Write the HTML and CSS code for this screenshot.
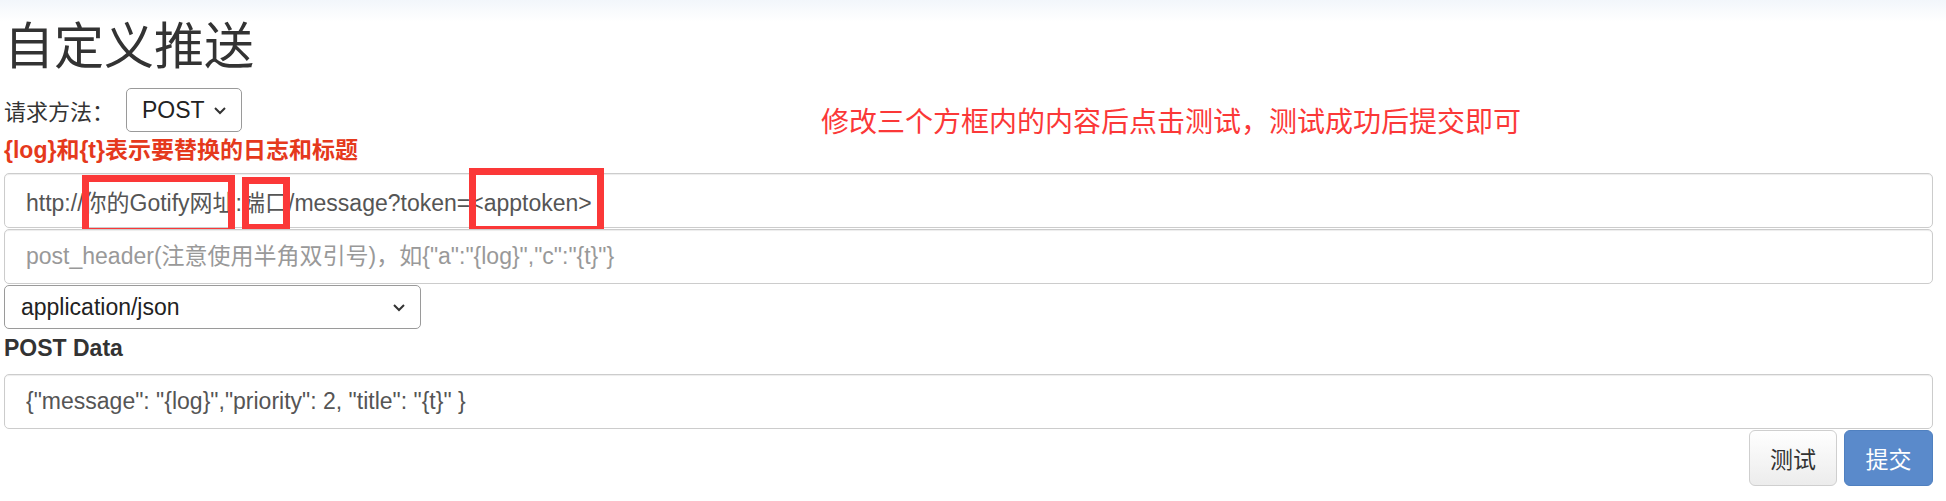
FILE: index.html
```html
<!DOCTYPE html>
<html lang="zh-CN">
<head>
<meta charset="utf-8">
<title>自定义推送</title>
<link rel="stylesheet" href="styles.css">
</head>
<body>
<div class="page">
  <h1 class="title">自定义推送</h1>
  <div class="method-row">
    <span class="method-label">请求方法：</span>
    <div class="select select-method">
      <span>POST</span>
      <svg class="chev" width="14" height="9" viewBox="0 0 14 9"><path d="M2 2l5 5 5-5" fill="none" stroke="#333" stroke-width="2"/></svg>
    </div>
  </div>
  <div class="hint">{log}和{t}表示要替换的日志和标题</div>
  <div class="field field-url">
    <input class="input" type="text" value="http://你的Gotify网址:端口/message?token=<apptoken>">
    <span class="mark mark-1"></span>
    <span class="mark mark-2"></span>
    <span class="mark mark-3"></span>
  </div>
  <div class="field">
    <input class="input" type="text" placeholder='post_header(注意使用半角双引号)，如{"a":"{log}","c":"{t}"}'>
  </div>
  <div class="select select-type">
    <span>application/json</span>
    <svg class="chev" width="14" height="9" viewBox="0 0 14 9"><path d="M2 2l5 5 5-5" fill="none" stroke="#333" stroke-width="2"/></svg>
  </div>
  <div class="data-label">POST Data</div>
  <div class="field">
    <input class="input" type="text" value='{"message": "{log}","priority": 2, "title": "{t}" }'>
  </div>
  <div class="actions">
    <button class="btn btn-default" type="button">测试</button>
    <button class="btn btn-primary" type="button">提交</button>
  </div>
  <div class="note">修改三个方框内的内容后点击测试，测试成功后提交即可</div>
</div>
</body>
</html>
```
FILE: styles.css
```css
html, body {
  margin: 0;
  padding: 0;
}
body {
  background: linear-gradient(to bottom, #f2f6fb 0px, #ffffff 22px);
  font-family: "Liberation Sans", "Noto Sans CJK SC", sans-serif;
  font-size: 23px;
  color: #333;
  height: 501px;
  overflow: hidden;
}
.page {
  position: relative;
  padding: 0 13px 0 4px;
}
.title {
  margin: 0;
  padding-top: 11px;
  font-size: 50px;
  font-weight: normal;
  line-height: 62px;
  height: 62px;
  color: #333;
  font-family: "Noto Sans CJK SC", sans-serif;
}
.method-row {
  display: flex;
  align-items: center;
  margin-top: 15px;
  height: 44px;
}
.method-label {
  font-family: "Noto Sans CJK SC", sans-serif;
  font-size: 22px;
  width: 122px;
}
.select {
  display: flex;
  align-items: center;
  justify-content: space-between;
  box-sizing: border-box;
  height: 44px;
  border: 1px solid #9a9a9a;
  border-radius: 5px;
  background: #fff;
  color: #222;
  font-size: 23px;
}
.select-method {
  width: 116px;
  padding: 0 14px 0 15px;
}
.select-type {
  width: 417px;
  padding: 0 14px 0 16px;
  margin-top: 1px;
}
.chev {
  display: block;
}
.hint {
  margin-top: 5px;
  font-weight: bold;
  color: #e5391c;
  font-size: 23px;
  line-height: 27px;
  height: 27px;
}
.field {
  position: relative;
  margin-top: 1px;
}
.field-url {
  margin-top: 9px;
}
.input {
  display: block;
  box-sizing: border-box;
  width: 100%;
  height: 55px;
  margin: 0;
  padding: 0 21px;
  border: 1px solid #cccccc;
  border-radius: 5px;
  box-shadow: inset 0 1px 1px rgba(0, 0, 0, 0.075);
  font-family: "Liberation Sans", "Noto Sans CJK SC", sans-serif;
  font-size: 23px;
  color: #555;
  background: #fff;
  outline: none;
}
.input::placeholder {
  color: #999;
}
.mark {
  position: absolute;
  box-sizing: border-box;
  border: 7px solid #fb3838;
}
.mark-1 { left: 78px; top: 2px; width: 153px; height: 60px; }
.mark-2 { left: 238px; top: 4px; width: 48px; height: 54px; }
.mark-3 { left: 465px; top: -5px; width: 135px; height: 65px; }
.data-label {
  margin-top: 6px;
  font-weight: bold;
  font-size: 23px;
  line-height: 26px;
  height: 26px;
  color: #333;
}
.data-label + .field {
  margin-top: 13px;
}
.actions {
  display: flex;
  justify-content: flex-end;
  gap: 7px;
  margin-top: 1px;
}
.btn {
  box-sizing: border-box;
  height: 56px;
  border-radius: 6px;
  font-family: "Noto Sans CJK SC", sans-serif;
  font-size: 23px;
  padding: 0;
  cursor: pointer;
}
.btn-default {
  width: 88px;
  border: 1px solid #cfcfcf;
  color: #333;
  background: linear-gradient(to bottom, #ffffff 0%, #ececec 100%);
}
.btn-primary {
  width: 89px;
  border: 1px solid #4f80c0;
  color: #fff;
  background: #5a8acb;
}
.note {
  position: absolute;
  left: 821px;
  top: 100px;
  font-family: "Noto Sans CJK SC", sans-serif;
  font-size: 28px;
  line-height: 40px;
  color: #fb3838;
  white-space: nowrap;
}
```
